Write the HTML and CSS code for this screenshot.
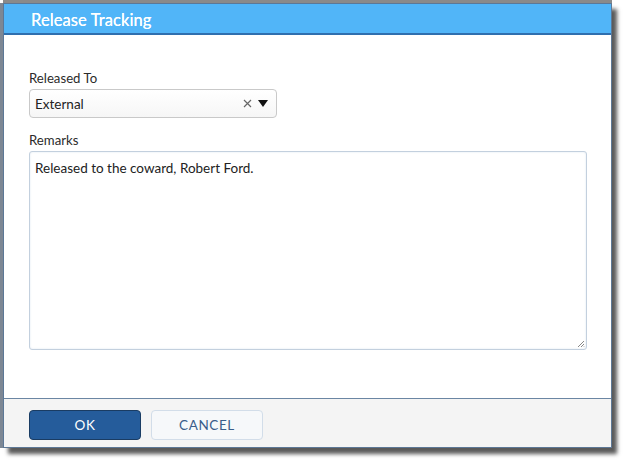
FILE: index.html
```html
<!DOCTYPE html>
<html>
<head>
<meta charset="utf-8">
<link rel="stylesheet" href="styles.css">
</head>
<body>
<div class="stage">
  <div class="dialog">
    <div class="header"><span class="title">Release Tracking</span></div>
    <div class="content">
      <label class="label">Released To</label>
      <div class="select">
        <span class="select-value">External</span>
        <span class="select-icons">
          <svg class="clear" width="9" height="9" viewBox="0 0 9 9"><path d="M1 1L8 8M8 1L1 8" stroke="#666" stroke-width="1.2" fill="none"/></svg>
          <svg class="caret" width="10" height="7" viewBox="0 0 10 7"><path d="M0 0H10L5 7Z" fill="#111"/></svg>
        </span>
      </div>
      <label class="label label-remarks">Remarks</label>
      <div class="textarea">
        <span class="textarea-text">Released to the coward, Robert Ford.</span>
        <svg class="grip" width="8" height="8" viewBox="0 0 8 8"><path d="M7 1L1 7M7 4L4 7M7 6.5L6.5 7" stroke="#888" stroke-width="1" fill="none"/></svg>
      </div>
    </div>
    <div class="footer">
      <button class="btn btn-primary">OK</button>
      <button class="btn btn-secondary">CANCEL</button>
    </div>
  </div>
</div>
</body>
</html>
```
FILE: styles.css
```css
html, body {
  margin: 0;
  padding: 0;
  background: #ffffff;
  width: 624px;
  height: 465px;
  overflow: hidden;
  font-family: Lato, "Open Sans", "Liberation Sans", sans-serif;
}
.stage {
  padding: 3px 0 0 3px;
}
.dialog {
  width: 607px;
  height: 443px;
  border: 1px solid #5d7896;
  background: #fff;
  display: flex;
  flex-direction: column;
  box-shadow: 0 -3px 0 0 #8a8a8a, -3px 0 0 0 #7d8794, 5px 6px 4px rgba(0,0,0,0.65);
}
.header {
  background: #51b5f8;
  border-bottom: 2px solid #2f6fae;
  display: flex;
  align-items: center;
  padding: 2px 0 0 27px;
  box-sizing: border-box;
  height: 31px;
}
.title {
  color: #fff;
  font-size: 16.5px;
  font-weight: 400;
  letter-spacing: 0.1px;
  text-shadow: 0 0 0.4px #fff;
}
.content {
  flex: 1;
  display: flex;
  flex-direction: column;
  padding: 35px 24px 0 25px;
}
.label {
  font-size: 13.2px;
  color: #2b2b2b;
  line-height: 16px;
  height: 16px;
}
.label-remarks {
  margin-top: 14px;
}
.select {
  margin-top: 3px;
  width: 241px;
  height: 27px;
  border: 1px solid #c9c9c9;
  border-radius: 4px;
  background: linear-gradient(#ffffff, #f6f6f6);
  display: flex;
  align-items: center;
  justify-content: space-between;
  padding: 0 0 0 5px;
}
.select-value {
  font-size: 13.5px;
  color: #222;
}
.select-icons {
  display: flex;
  align-items: center;
  gap: 6px;
  padding-right: 8px;
}
.clear { display: block; }
.caret { display: block; }
.textarea {
  margin-top: 3px;
  position: relative;
  width: 551px;
  height: 197px;
  border: 1px solid #c3d0de;
  border-radius: 3px;
  box-shadow: inset 0 0 2px rgba(150,180,210,0.35);
  padding: 0 0 0 5px;
  box-sizing: content-box;
}
.textarea-text {
  display: block;
  margin-top: 8px;
  font-size: 13.5px;
  color: #222;
  line-height: 16px;
}
.grip {
  position: absolute;
  right: 1px;
  bottom: 1px;
}
.footer {
  height: 37px;
  border-top: 1px solid #6b86a3;
  background: #f4f4f4;
  display: flex;
  align-items: flex-start;
  gap: 10px;
  padding: 11px 0 0 25px;
}
.btn {
  width: 112px;
  height: 30px;
  border-radius: 4px;
  font-family: Lato, "Open Sans", "Liberation Sans", sans-serif;
  font-size: 13.5px;
  letter-spacing: 0.6px;
  padding: 0;
  margin: 0;
}
.btn-primary {
  background: #255c9b;
  border: 1px solid #1a3c63;
  color: #fff;
}
.btn-secondary {
  background: #f6f8fa;
  border: 1px solid #d2dde9;
  color: #3a5d8a;
}
```
